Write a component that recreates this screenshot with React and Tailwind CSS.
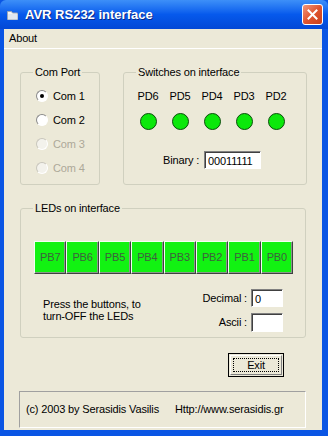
import React from "react";

const font = { fontFamily: '"Liberation Sans", Arial, sans-serif' };

const Radio = ({ label, checked, disabled }) => (
  <div className="h-[24px] flex items-center">
    <div
      className={`w-[12px] h-[12px] rounded-full border flex items-center justify-center ${
        disabled
          ? "border-t-[#c8c6bc] border-l-[#c8c6bc] border-b-white border-r-white bg-[#f3f2ec]"
          : "border-t-[#8a8a8a] border-l-[#8a8a8a] border-b-white border-r-white bg-white"
      }`}
    >
      {checked && <div className="w-[4px] h-[4px] rounded-full bg-black" />}
    </div>
    <span className={`ml-[5px] text-[11px] ${disabled ? "text-[#aca899]" : "text-black"}`}>{label}</span>
  </div>
);

const GroupBox = ({ title, className, children }) => (
  <fieldset className={`border border-[#d0d0bf] rounded-[3px] p-0 m-0 ${className}`}>
    <legend className="ml-[12px] px-[2px] text-[11px] leading-[13px] text-black">{title}</legend>
    {children}
  </fieldset>
);

const Sunken = ({ className, children }) => (
  <div
    className={`bg-white border border-t-[#808080] border-l-[#808080] border-b-white border-r-white shadow-[inset_1px_1px_0_#404040] text-[11px] leading-none pl-[3px] pt-[4px] ${className}`}
  >
    {children}
  </div>
);

export default function App() {
  const leds = ["PB7", "PB6", "PB5", "PB4", "PB3", "PB2", "PB1", "PB0"];
  const switches = ["PD6", "PD5", "PD4", "PD3", "PD2"];

  return (
    <div className="w-[328px] h-[436px] bg-[#0a55e4] flex flex-col overflow-hidden" style={font}>
      {/* title bar */}
      <div className="h-[29px] shrink-0 flex items-center bg-linear-to-b from-[#3d8ff8] via-[#0659ec] to-[#0348d6] rounded-t-[6px]">
        <svg width="11" height="10" viewBox="0 0 11 10" className="ml-[7px]">
          <path d="M0.5 1.5h4l1 1.5h5v6.5h-10z" fill="#f4f4f4" stroke="#9aa6b8" />
          <path d="M1 4h9.5v5.5H1z" fill="#dfe6f0" />
        </svg>
        <span className="ml-[7px] text-white font-bold text-[13px] [text-shadow:1px_1px_0_#0a2a88]">
          AVR RS232 interface
        </span>
        <div className="ml-auto mr-[5px] w-[21px] h-[21px] rounded-[3px] border border-white bg-linear-to-br from-[#f0957a] via-[#e0542e] to-[#c8401c] flex items-center justify-center">
          <svg width="11" height="11" viewBox="0 0 11 11">
            <path d="M1.5 1.5l8 8M9.5 1.5l-8 8" stroke="white" strokeWidth="2" strokeLinecap="square" />
          </svg>
        </div>
      </div>

      {/* client area */}
      <div className="flex-1 ml-[4px] mr-[6px] mb-[6px] bg-[#ece9d8] flex flex-col tracking-[-0.15px]">
        <div className="h-[19px] flex items-center pl-[5px] text-[11px] text-black">About</div>
        <div className="h-px bg-white" />

        <div className="flex mt-[17px] pl-[16px]">
          <GroupBox title="Com Port" className="w-[80px] h-[119px]">
            <div className="pt-[5px] pl-[15px]">
              <Radio label="Com 1" checked />
              <Radio label="Com 2" />
              <Radio label="Com 3" disabled />
              <Radio label="Com 4" disabled />
            </div>
          </GroupBox>

          <GroupBox title="Switches on interface" className="ml-[23px] w-[184px] h-[119px]">
            <div className="flex pl-[8px] pt-[11px]">
              {switches.map((s) => (
                <div key={s} className="w-[32px] flex flex-col items-center">
                  <span className="text-[11px] leading-[13px] text-black">{s}</span>
                  <div className="mt-[10px] w-[17px] h-[17px] rounded-full bg-[#0be80b] border border-[#0b4d0b]" />
                </div>
              ))}
            </div>
            <div className="flex items-center mt-[21px] pl-[39px]">
              <span className="text-[11px] text-black">Binary :</span>
              <Sunken className="ml-[5px] w-[57px] h-[18px]">00011111</Sunken>
            </div>
          </GroupBox>
        </div>

        <GroupBox title="LEDs on interface" className="mt-[17px] ml-[16px] w-[286px] h-[136px]">
          <div className="mt-[26px] ml-[13px] grid grid-cols-8 w-[259px]">
            {leds.map((l) => (
              <div
                key={l}
                className="h-[33px] bg-[#12f212] border border-t-[#f2fff2] border-l-[#f2fff2] border-b-[#404040] border-r-[#404040] shadow-[inset_-1px_-1px_0_#8a9a8a] flex items-center justify-center text-[11px] text-[#3e5f3e]"
              >
                {l}
              </div>
            ))}
          </div>
          <div className="flex mt-[15px]">
            <div className="ml-[22px] mt-[9px] text-[11px] leading-[12px] text-black">
              <div>Press the buttons, to</div>
              <div>turn-OFF the LEDs</div>
            </div>
            <div className="ml-auto mr-[22px] flex flex-col items-end gap-[6px]">
              <div className="flex items-center">
                <span className="text-[11px] text-black">Decimal :</span>
                <Sunken className="ml-[4px] w-[32px] h-[18px]">0</Sunken>
              </div>
              <div className="flex items-center">
                <span className="text-[11px] text-black">Ascii :</span>
                <Sunken className="ml-[4px] w-[32px] h-[19px]" />
              </div>
            </div>
          </div>
        </GroupBox>

        <div className="flex justify-end pr-[38px] mt-[15px]">
          <div className="w-[56px] h-[24px] border border-black bg-[#ece9d8] p-px">
            <div className="w-full h-full border border-t-white border-l-white border-b-[#808080] border-r-[#808080] p-[2px]">
              <div className="w-full h-full border border-dotted border-black flex items-center justify-center text-[11px] text-black">
                Exit
              </div>
            </div>
          </div>
        </div>

        <div className="mt-[14px] ml-[15px] w-[287px] h-[37px] border border-t-[#a0a0a0] border-l-[#a0a0a0] border-b-white border-r-white flex items-center text-[11px] text-black">
          <span className="ml-[6px]">(c) 2003 by Serasidis Vasilis</span>
          <span className="ml-[16px]">Http://www.serasidis.gr</span>
        </div>
      </div>
    </div>
  );
}
